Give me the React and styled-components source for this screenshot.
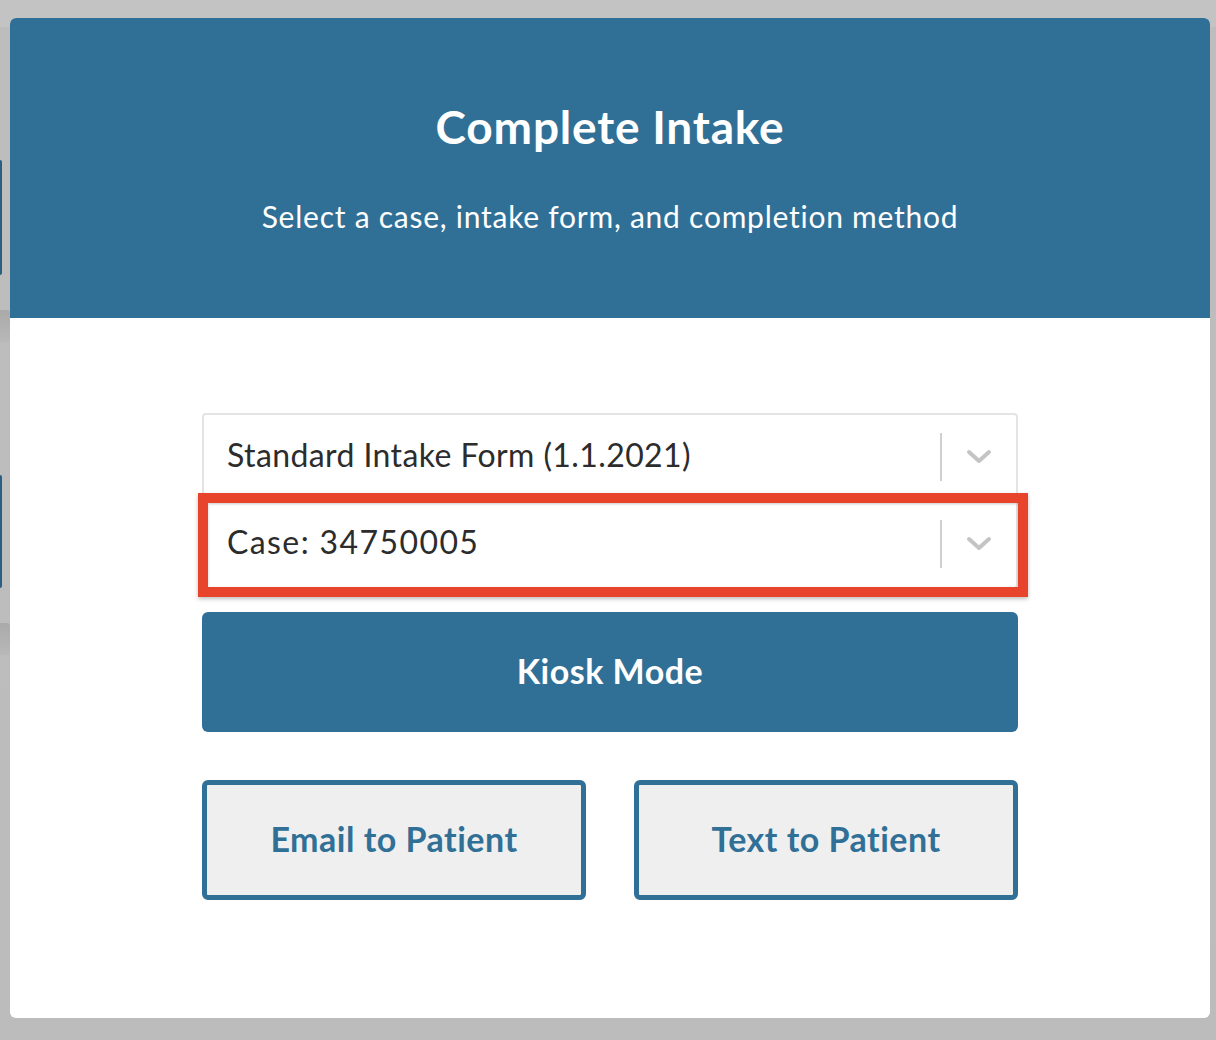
import React from "react";
import styled, { createGlobalStyle } from "styled-components";

const Global = createGlobalStyle`
  html, body { margin: 0; padding: 0; }
  body {
    background: #bcbcbc;
    font-family: Lato, "Open Sans", "Liberation Sans", sans-serif;
    width: 1216px;
    height: 1040px;
    overflow: hidden;
  }
`;

const Stage = styled.div`
  position: relative;
  width: 1216px;
  height: 1040px;
  padding: 18px 6px 0 10px;
  box-sizing: border-box;
  background: linear-gradient(#c3c3c3 0, #c3c3c3 27px, #bdbdbd 27px, #bcbcbc 100%);
`;

const BackdropPiece = styled.div`
  position: absolute;
  left: 0;
  top: ${(p) => p.$top}px;
  width: ${(p) => p.$w}px;
  height: ${(p) => p.$h}px;
  background: ${(p) => p.$bg};
  border-radius: 0 3px 3px 0;
`;

const Modal = styled.div`
  position: relative;
  width: 1200px;
  height: 1000px;
  border-radius: 6px;
  overflow: hidden;
  background: #ffffff;
  display: flex;
  flex-direction: column;
`;

const Header = styled.header`
  height: 300px;
  box-sizing: border-box;
  background: #317096;
  color: #ffffff;
  display: flex;
  flex-direction: column;
  align-items: center;
  padding-top: 82px;
`;

const Title = styled.h1`
  margin: 0;
  font-size: 46px;
  line-height: 53px;
  font-weight: 700;
  letter-spacing: 0.8px;
`;

const Subtitle = styled.p`
  margin: 46px 0 0;
  font-size: 30px;
  line-height: 34px;
  font-weight: 400;
  letter-spacing: 0.75px;
`;

const Body = styled.div`
  padding: 95px 192px 0;
  display: flex;
  flex-direction: column;
`;

const SelectWrap = styled.div`
  position: relative;
`;

const Select = styled.div`
  height: 88px;
  box-sizing: border-box;
  border: 2px solid #e4e4e4;
  border-radius: ${(p) => (p.$first ? "4px 4px 0 0" : "0 0 4px 4px")};
  ${(p) => (p.$first ? "" : "border-top: none;")}
  background: #fff;
  display: flex;
  align-items: center;
  padding-left: 23px;
`;

const SelectValue = styled.span`
  flex: 1;
  font-size: 32px;
  line-height: 40px;
  padding-bottom: 5px;
  color: #2c2c2c;
  letter-spacing: ${(p) => p.$spacing || 0.4}px;
`;

const Divider = styled.span`
  width: 2px;
  height: 48px;
  background: #cfcfcf;
`;

const Chevron = styled.span`
  width: 74px;
  display: flex;
  justify-content: center;
  align-items: center;
`;

const Highlight = styled.div`
  position: absolute;
  left: -4px;
  right: -10px;
  top: -8px;
  bottom: -8px;
  border: 10px solid #e8432b;
  box-shadow: 0 2px 4px rgba(0, 0, 0, 0.25), inset 0 1px 3px rgba(0, 0, 0, 0.2);
  pointer-events: none;
`;

const PrimaryButton = styled.button`
  margin-top: 23px;
  height: 120px;
  padding: 0 0 4px;
  border: none;
  border-radius: 6px;
  background: #317096;
  color: #fff;
  font-family: inherit;
  font-size: 34px;
  font-weight: 700;
  letter-spacing: 0.5px;
`;

const ButtonRow = styled.div`
  margin-top: 48px;
  display: grid;
  grid-template-columns: 1fr 1fr;
  gap: 48px;
`;

const OutlineButton = styled.button`
  height: 120px;
  padding: 0 0 4px;
  border: 5px solid #317096;
  border-radius: 6px;
  background: #efefef;
  color: #317096;
  font-family: inherit;
  font-size: 34px;
  font-weight: 700;
  letter-spacing: 0.5px;
`;

const ChevronIcon = () => (
  <svg width="26" height="16" viewBox="0 0 26 16" fill="none">
    <path d="M3 3 L13 12 L23 3" stroke="#c4c4c4" strokeWidth="4" strokeLinecap="round" strokeLinejoin="round" />
  </svg>
);

export default function App() {
  return (
    <>
      <Global />
      <Stage>
        <BackdropPiece $top={160} $w={2} $h={115} $bg="#2b5f80" />
        <BackdropPiece $top={310} $w={10} $h={32} $bg="linear-gradient(#aaaaaa, #b8b8b8)" />
        <BackdropPiece $top={475} $w={2} $h={113} $bg="#2b5f80" />
        <BackdropPiece $top={623} $w={10} $h={32} $bg="linear-gradient(#aaaaaa, #b8b8b8)" />
        <Modal>
          <Header>
            <Title>Complete Intake</Title>
            <Subtitle>Select a case, intake form, and completion method</Subtitle>
          </Header>
          <Body>
            <Select $first>
              <SelectValue>Standard Intake Form (1.1.2021)</SelectValue>
              <Divider />
              <Chevron>
                <ChevronIcon />
              </Chevron>
            </Select>
            <SelectWrap>
              <Select>
                <SelectValue $spacing={1.4}>Case: 34750005</SelectValue>
                <Divider />
                <Chevron>
                  <ChevronIcon />
                </Chevron>
              </Select>
              <Highlight />
            </SelectWrap>
            <PrimaryButton>Kiosk Mode</PrimaryButton>
            <ButtonRow>
              <OutlineButton>Email to Patient</OutlineButton>
              <OutlineButton>Text to Patient</OutlineButton>
            </ButtonRow>
          </Body>
        </Modal>
      </Stage>
    </>
  );
}
